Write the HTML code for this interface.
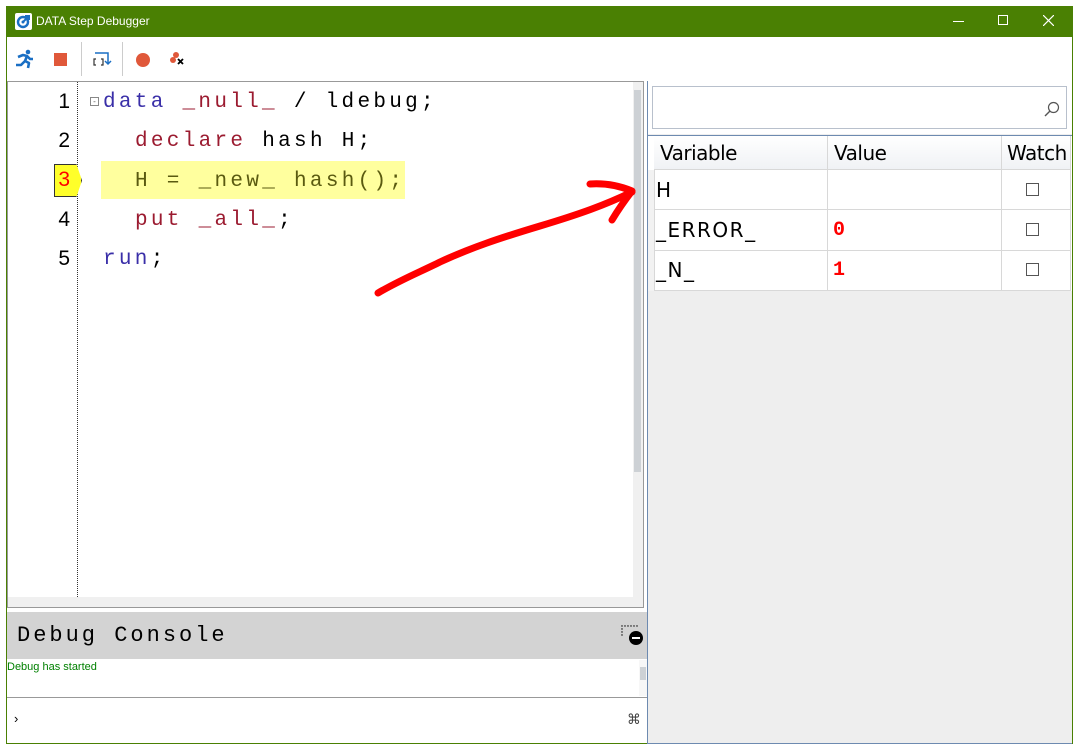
<!DOCTYPE html>
<html><head><meta charset="utf-8"><style>
*{margin:0;padding:0;box-sizing:border-box}
body{width:1079px;height:749px;background:#fff;position:relative;overflow:hidden;font-family:"Liberation Sans",sans-serif}
.a{position:absolute}
.code{font-family:"Liberation Mono","DejaVu Sans Mono",monospace;font-size:21px;letter-spacing:3.3px;white-space:pre}
.kw{color:#3a2fa8}
.rd{color:#9b1b30}
.bk{color:#000}
.ln{font-family:"Liberation Sans",sans-serif;font-size:21px;color:#000;text-align:right;width:30px}
.cb{position:absolute;width:13px;height:13px;border:1px solid #555;background:#fff}
</style></head><body>
<div class="a" style="left:6px;top:6px;width:1067px;height:738px;border:1px solid #4a8003;background:#fff"></div>
<div class="a" style="left:6px;top:6px;width:1067px;height:31px;background:#4a8003"></div>
<svg class="a" style="left:15px;top:13px" width="17" height="17" viewBox="0 0 17 17"><rect width="17" height="17" rx="2" fill="#fff"/><circle cx="8" cy="9" r="5" fill="none" stroke="#1a6fc4" stroke-width="2.4"/><circle cx="8" cy="9" r="1.5" fill="#1a6fc4"/><path d="M8 9 L14 3 M10 3 H14 V7" stroke="#1a6fc4" stroke-width="2" fill="none"/></svg>
<div class="a" style="left:36px;top:14px;color:#fff;font-size:12px">DATA Step Debugger</div>
<div class="a" style="left:953px;top:21px;width:11px;height:1px;background:#fff"></div>
<div class="a" style="left:998px;top:15px;width:10px;height:10px;border:1px solid #fff"></div>
<svg class="a" style="left:1043px;top:15px" width="11" height="11"><path d="M0 0L11 11M11 0L0 11" stroke="#fff" stroke-width="1.2"/></svg>
<svg class="a" style="left:15px;top:49px" width="20" height="20" viewBox="0 0 20 20"><circle cx="13" cy="3" r="2.3" fill="#1a6fc4"/><path d="M3 8 L8 6 L12 7 L10 12 L14 14 L13 19 M10 12 L6 16 L1 16 M12 7 L15 10 L18 10" stroke="#1a6fc4" stroke-width="2.6" fill="none" stroke-linejoin="round"/></svg>
<div class="a" style="left:54px;top:53px;width:13px;height:13px;background:#e0583a"></div>
<div class="a" style="left:81px;top:42px;width:1px;height:34px;background:#ccc"></div>
<svg class="a" style="left:92px;top:51px" width="20" height="16"><path d="M3 2H16V12" stroke="#1a6fc4" stroke-width="1.5" fill="none"/><path d="M13 10L16 13L19 10" stroke="#1a6fc4" stroke-width="1.5" fill="none"/><path d="M4 8H2V14H4M9 8H11V14H9" stroke="#333" stroke-width="1.2" fill="none"/></svg>
<div class="a" style="left:122px;top:42px;width:1px;height:34px;background:#ccc"></div>
<div class="a" style="left:136px;top:53px;width:14px;height:14px;border-radius:50%;background:#e0583a"></div>
<svg class="a" style="left:169px;top:51px" width="16" height="16"><circle cx="7" cy="4" r="3" fill="#e0583a"/><circle cx="4" cy="9" r="3" fill="#e0583a"/><path d="M9 8L14 13M14 8L9 13" stroke="#000" stroke-width="1.8"/></svg>
<div class="a" style="left:7px;top:81px;width:637px;height:527px;border:1px solid #999;background:#fff"></div>
<div class="a" style="left:77px;top:82px;height:515px;border-left:1px dotted #333"></div>
<div class="a" style="left:633px;top:82px;width:10px;height:515px;background:#f0f0f0"></div>
<div class="a" style="left:634px;top:90px;width:7px;height:382px;background:#cdd1d5"></div>
<div class="a" style="left:8px;top:597px;width:635px;height:10px;background:#f0f0f0"></div>
<div class="a" style="left:101px;top:161px;width:304px;height:38px;background:#ffff9e"></div>
<div class="a ln" style="left:40px;top:90px">1</div>
<div class="a ln" style="left:40px;top:129px">2</div>
<div class="a" style="left:54px;top:164px;width:28px;height:33px;background:#ffff2a;border:1px solid #333;clip-path:polygon(0 0,80% 0,100% 50%,80% 100%,0 100%)"></div>
<div class="a ln" style="left:40px;top:168px;color:#f00">3</div>
<div class="a ln" style="left:40px;top:208px">4</div>
<div class="a ln" style="left:40px;top:247px">5</div>
<div class="a" style="left:90px;top:97px;width:9px;height:9px;border:1px solid #888;font-size:8px;line-height:7px;text-align:center;color:#555">-</div>
<div class="a code" style="left:103px;top:91px"><span class="kw">data</span> <span class="rd">_null_</span> <span class="bk">/ ldebug;</span></div>
<div class="a code" style="left:135px;top:130px"><span class="rd">declare</span> <span class="bk">hash H;</span></div>
<div class="a code" style="left:135px;top:170px;color:#5a5a10">H = _new_ hash();</div>
<div class="a code" style="left:135px;top:209px"><span class="rd">put _all_</span><span class="bk">;</span></div>
<div class="a code" style="left:103px;top:248px"><span class="kw">run</span><span class="bk">;</span></div>
<div class="a" style="left:7px;top:612px;width:641px;height:47px;background:#d3d3d3"></div>
<div class="a code" style="left:17px;top:623px;color:#000;font-size:22px;letter-spacing:3px">Debug Console</div>
<svg class="a" style="left:620px;top:624px" width="24" height="22"><g fill="#000"><circle cx="2" cy="2" r=".7"/><circle cx="5" cy="2" r=".7"/><circle cx="8" cy="2" r=".7"/><circle cx="11" cy="2" r=".7"/><circle cx="14" cy="2" r=".7"/><circle cx="17" cy="2" r=".7"/><circle cx="2" cy="5" r=".7"/><circle cx="2" cy="8" r=".7"/><circle cx="2" cy="11" r=".7"/><circle cx="16" cy="14" r="7"/></g><rect x="12" y="13" width="8" height="2" fill="#fff"/></svg>
<div class="a" style="left:7px;top:661px;color:#008000;font-size:11px">Debug has started</div>
<div class="a" style="left:639px;top:660px;width:8px;height:36px;background:#f7f7f7"></div>
<div class="a" style="left:640px;top:667px;width:6px;height:13px;background:#cdd1d5"></div>
<div class="a" style="left:7px;top:697px;width:641px;height:1px;background:#999"></div>
<div class="a" style="left:14px;top:711px;font-size:13px;color:#000">›</div>
<div class="a" style="left:627px;top:712px;font-size:14px;color:#444;font-family:'DejaVu Sans',sans-serif">⌘</div>
<div class="a" style="left:647px;top:81px;width:425px;height:663px;background:#eee;border-left:1px solid #6d8ab0;border-bottom:1px solid #6d8ab0"></div>
<div class="a" style="left:648px;top:81px;width:424px;height:53px;background:#fff"></div>
<div class="a" style="left:652px;top:86px;width:415px;height:43px;border:1px solid #b8c0cc;background:#fff"></div>
<svg class="a" style="left:1044px;top:101px" width="16" height="16"><circle cx="9.5" cy="6.5" r="5" fill="none" stroke="#555" stroke-width="1.2"/><path d="M6 10L1 15" stroke="#555" stroke-width="1.4"/></svg>
<div class="a" style="left:648px;top:135px;width:424px;height:156px;border-top:1px solid #6d8ab0;background:#fff"></div>
<div class="a" style="left:654px;top:136px;width:417px;height:34px;background:linear-gradient(#fff,#f0f2f5);border-bottom:1px solid #d8d8d8"></div>
<div class="a" style="left:827px;top:136px;width:1px;height:155px;background:#d8d8d8"></div>
<div class="a" style="left:1001px;top:136px;width:1px;height:155px;background:#d8d8d8"></div>
<div class="a" style="left:1070px;top:136px;width:1px;height:155px;background:#d8d8d8"></div>
<div class="a" style="left:648px;top:170px;width:6px;height:121px;background:#f2f2f2"></div>
<div class="a" style="left:654px;top:170px;width:1px;height:121px;background:#d8d8d8"></div>
<div class="a" style="left:654px;top:209px;width:417px;height:1px;background:#d8d8d8"></div>
<div class="a" style="left:654px;top:250px;width:417px;height:1px;background:#d8d8d8"></div>
<div class="a" style="left:654px;top:290px;width:417px;height:1px;background:#d8d8d8"></div>
<div class="a" style="left:660px;top:141px;font-size:20px;color:#000;font-family:'DejaVu Sans',sans-serif;letter-spacing:-0.5px">Variable</div>
<div class="a" style="left:834px;top:141px;font-size:20px;color:#000;font-family:'DejaVu Sans',sans-serif;letter-spacing:-0.5px">Value</div>
<div class="a" style="left:1007px;top:141px;font-size:20px;color:#000;font-family:'DejaVu Sans',sans-serif;letter-spacing:-0.5px">Watch</div>
<div class="a code" style="left:656px;top:178px;font-size:20px;letter-spacing:1.5px;color:#000;font-family:'DejaVu Sans',sans-serif">H</div>
<div class="a code" style="left:656px;top:218px;font-size:20px;letter-spacing:1.5px;color:#000;font-family:'DejaVu Sans',sans-serif">_ERROR_</div>
<div class="a code" style="left:656px;top:258px;font-size:20px;letter-spacing:1.5px;color:#000;font-family:'DejaVu Sans',sans-serif">_N_</div>
<div class="a code" style="left:833px;top:219px;font-size:20px;color:#f00;font-weight:bold">0</div>
<div class="a code" style="left:833px;top:259px;font-size:20px;color:#f00;font-weight:bold">1</div>
<div class="cb" style="left:1026px;top:183px"></div>
<div class="cb" style="left:1026px;top:223px"></div>
<div class="cb" style="left:1026px;top:263px"></div>
<svg class="a" style="left:0;top:0" width="1079" height="749"><g stroke="#f00" stroke-width="7" fill="none" stroke-linecap="round" stroke-linejoin="round"><path d="M378 293 C400 280 420 272 440 262 C470 248 500 238 540 226 C580 214 605 205 632 192"/><path d="M590 184 C605 183 620 186 632 191 C625 200 618 210 612 220"/></g></svg>
</body></html>
